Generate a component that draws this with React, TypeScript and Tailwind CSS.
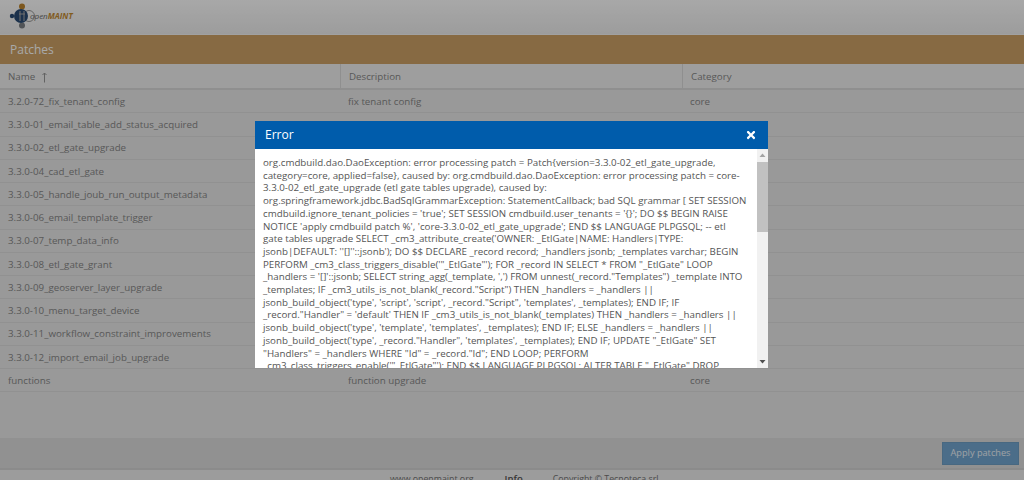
import { FaTimes } from "react-icons/fa";

const rows = [
  { name: "3.2.0-72_fix_tenant_config", description: "fix tenant config", category: "core" },
  { name: "3.3.0-01_email_table_add_status_acquired", description: "", category: "" },
  { name: "3.3.0-02_etl_gate_upgrade", description: "", category: "" },
  { name: "3.3.0-04_cad_etl_gate", description: "", category: "" },
  { name: "3.3.0-05_handle_joub_run_output_metadata", description: "", category: "" },
  { name: "3.3.0-06_email_template_trigger", description: "", category: "" },
  { name: "3.3.0-07_temp_data_info", description: "", category: "" },
  { name: "3.3.0-08_etl_gate_grant", description: "", category: "" },
  { name: "3.3.0-09_geoserver_layer_upgrade", description: "", category: "" },
  { name: "3.3.0-10_menu_target_device", description: "", category: "" },
  { name: "3.3.0-11_workflow_constraint_improvements", description: "", category: "" },
  { name: "3.3.0-12_import_email_job_upgrade", description: "", category: "" },
  { name: "functions", description: "function upgrade", category: "core" },
];

const errorText = `org.cmdbuild.dao.DaoException: error processing patch = Patch{version=3.3.0-02_etl_gate_upgrade, category=core, applied=false}, caused by: org.cmdbuild.dao.DaoException: error processing patch = core-3.3.0-02_etl_gate_upgrade (etl gate tables upgrade), caused by: org.springframework.jdbc.BadSqlGrammarException: StatementCallback; bad SQL grammar [ SET SESSION cmdbuild.ignore_tenant_policies = 'true'; SET SESSION cmdbuild.user_tenants = '{}'; DO $$ BEGIN RAISE NOTICE 'apply cmdbuild patch %', 'core-3.3.0-02_etl_gate_upgrade'; END $$ LANGUAGE PLPGSQL; -- etl gate tables upgrade SELECT _cm3_attribute_create('OWNER: _EtlGate|NAME: Handlers|TYPE: jsonb|DEFAULT: ''[]''::jsonb'); DO $$ DECLARE _record record; _handlers jsonb; _templates varchar; BEGIN PERFORM _cm3_class_triggers_disable('"_EtlGate"'); FOR _record IN SELECT * FROM "_EtlGate" LOOP _handlers = '[]'::jsonb; SELECT string_agg(_template, ',') FROM unnest(_record."Templates") _template INTO _templates; IF _cm3_utils_is_not_blank(_record."Script") THEN _handlers = _handlers || jsonb_build_object('type', 'script', 'script', _record."Script", 'templates', _templates); END IF; IF _record."Handler" = 'default' THEN IF _cm3_utils_is_not_blank(_templates) THEN _handlers = _handlers || jsonb_build_object('type', 'template', 'templates', _templates); END IF; ELSE _handlers = _handlers || jsonb_build_object('type', _record."Handler", 'templates', _templates); END IF; UPDATE "_EtlGate" SET "Handlers" = _handlers WHERE "Id" = _record."Id"; END LOOP; PERFORM _cm3_class_triggers_enable('"_EtlGate"'); END $$ LANGUAGE PLPGSQL; ALTER TABLE "_EtlGate" DROP COLUMN "Script";`;

const Logo = () => (
  <div className="flex items-center">
    <svg width="30" height="30" viewBox="0 0 30 30" className="shrink-0">
      <circle cx="22" cy="15" r="5.5" fill="none" stroke="#8f8f8f" strokeWidth="1" />
      <circle cx="15" cy="5.5" r="3" fill="#b87a1c" />
      <circle cx="15" cy="24.5" r="3" fill="#6f7378" />
      <circle cx="5" cy="15" r="2.2" fill="#143a66" />
      <circle cx="14" cy="15" r="7" fill="#143a66" />
      <path d="M13 10v10M17 10v10M12 13h6" stroke="#a0a0a0" strokeWidth="1" fill="none" />
    </svg>
    <span className="-ml-[7px] text-[8px] italic leading-none text-[#5a5a5a]">
      open<span className="font-bold text-[#c08018]">MAINT</span>
    </span>
  </div>
);

const App = () => {
  return (
    <div className="relative flex h-[480px] w-[1024px] flex-col overflow-hidden bg-[#e6e6e6] font-['Open_Sans',sans-serif] text-[9.75px] text-[#7a7a7a]">
      <header className="flex h-[35px] items-center border-b border-[#f4f4f4] bg-gradient-to-b from-[#ffffff] to-[#ececec] pb-[3px] pl-[7px]">
        <Logo />
      </header>
      <div className="flex h-[29px] shrink-0 items-center bg-[#c89858] pl-[10px] text-[12px] text-[#fff]">
        Patches
      </div>
      <div className="flex h-[26px] shrink-0 items-stretch border-b-2 border-[#d5d5d5] bg-[#efefef]">
        <div className="flex w-[340px] items-center gap-[6px] pt-[2px] pl-2">
          Name
          <svg width="7" height="11" viewBox="0 0 7 11" fill="none" stroke="#8a8a8a" strokeWidth="1">
            <path d="M3.5 10.5V1M1.5 3l2-2 2 2" />
          </svg>
        </div>
        <div className="flex w-[342px] items-center border-l border-[#d5d5d5] pt-[2px] pl-2">Description</div>
        <div className="flex flex-1 items-center border-l border-[#d5d5d5] pt-[2px] pl-2">Category</div>
      </div>
      <div className="flex-1">
        {rows.map((row) => (
          <div key={row.name} className="flex h-[23.25px] items-center border-b border-[#d9d9d9] pt-[2px]">
            <div className="w-[340px] pl-2">{row.name}</div>
            <div className="w-[342px] pl-2">{row.description}</div>
            <div className="flex-1 pl-2">{row.category}</div>
          </div>
        ))}
      </div>
      <div className="flex h-[32px] shrink-0 items-center justify-end border-b-2 border-[#cfcfcf] bg-[#d9d9d9] pr-[5px]">
        <button
          type="button"
          className="flex h-[23px] w-[77px] items-center justify-center border border-[#5f94bf] bg-[#649dcc] text-[9.2px] text-[#eef4f9]"
        >
          Apply patches
        </button>
      </div>
      <footer className="flex h-[10px] shrink-0 bg-[#ebebeb] text-[8.8px] leading-[18px] text-[#666]">
        <span className="ml-[390px]">www.openmaint.org</span>
        <span className="ml-[31px] text-[9.5px] font-semibold text-[#444]">Info</span>
        <span className="ml-[30px]">Copyright © Tecnoteca srl</span>
      </footer>

      <div className="absolute inset-0 bg-[#252525]/40" />

      <div className="absolute top-[121px] left-[255px] flex h-[247px] w-[513px] flex-col bg-white">
        <div className="flex h-[28px] shrink-0 items-center justify-between bg-[#005cab] pr-[11px] pl-[10px] text-[12px] text-white">
          Error
          <FaTimes size={12} />
        </div>
        <div className="flex min-h-0 flex-1">
          <div className="min-w-0 flex-1 overflow-hidden pt-[8px] pr-[10px] pl-2 text-[9.75px] leading-[12.7px] text-[#555]">
            <p>{errorText}</p>
          </div>
          <div className="flex w-[11px] shrink-0 flex-col bg-[#f1f1f1]">
            <svg width="11" height="13" viewBox="0 0 11 13" className="shrink-0">
              <path d="M5.5 4.5 8.5 8h-6z" fill="#a3a3a3" />
            </svg>
            <div className="h-[70px] bg-[#c1c1c1]" />
            <div className="flex-1" />
            <svg width="11" height="13" viewBox="0 0 11 13" className="shrink-0">
              <path d="M5.5 8.5 8.5 5h-6z" fill="#505050" />
            </svg>
          </div>
        </div>
      </div>
    </div>
  );
};

export default App;
